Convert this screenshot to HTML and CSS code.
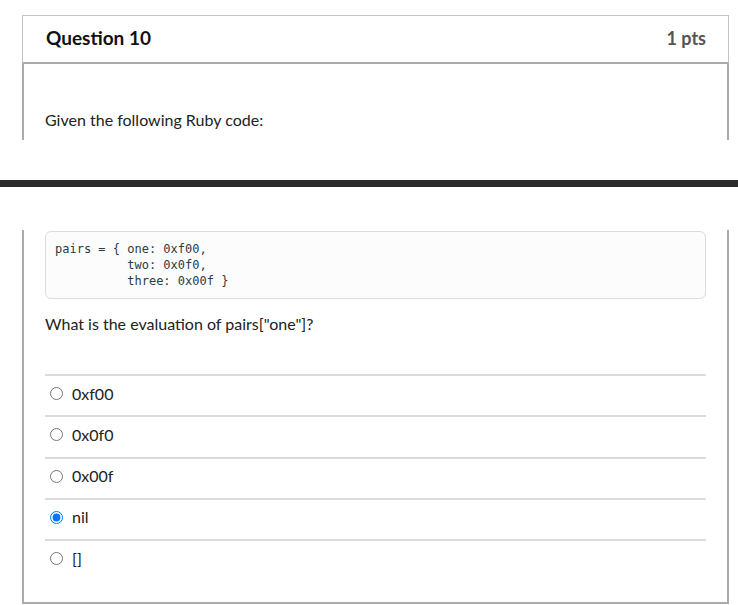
FILE: index.html
```html
<!DOCTYPE html>
<html>
<head>
<meta charset="utf-8">
<link rel="stylesheet" href="styles.css">
</head>
<body>
<div class="page">
  <section class="question-top">
    <header class="q-header">
      <h2 class="q-title">Question 10</h2>
      <span class="q-pts">1 pts</span>
    </header>
    <div class="q-body-top">
      <p class="q-text">Given the following Ruby code:</p>
    </div>
  </section>

  <div class="divider"></div>

  <section class="question-bottom">
    <pre class="code">pairs = { one: 0xf00,
          two: 0x0f0,
          three: 0x00f }</pre>
    <p class="q-text q-prompt">What is the evaluation of pairs["one"]?</p>
    <div class="answers">
      <label class="answer"><input type="radio" name="a"><span>0xf00</span></label>
      <label class="answer"><input type="radio" name="a"><span>0x0f0</span></label>
      <label class="answer"><input type="radio" name="a"><span>0x00f</span></label>
      <label class="answer"><input type="radio" name="a" checked><span>nil</span></label>
      <label class="answer"><input type="radio" name="a"><span>[]</span></label>
    </div>
  </section>
</div>
</body>
</html>
```
FILE: styles.css
```css
* { box-sizing: border-box; }

html, body {
  margin: 0;
  padding: 0;
  background: #fff;
}

body {
  font-family: Lato, "Liberation Sans", Arial, sans-serif;
  color: #222;
  width: 738px;
  height: 605px;
  overflow: hidden;
}

.page {
  padding-top: 15px;
}

.question-top {
  margin: 0 9px 0 22px;
  width: 707px;
}

.q-header {
  display: flex;
  justify-content: space-between;
  align-items: center;
  height: 49px;
  padding: 0 22px 3px 23px;
  border: 1px solid #c4c4c4;
  border-bottom: 2px solid #ababab;
}

.q-title {
  margin: 0;
  font-size: 19px;
  font-weight: 700;
  color: #111;
}

.q-pts {
  font-size: 18px;
  font-weight: 700;
  color: #555;
}

.q-body-top {
  height: 76px;
  padding: 46px 21px 0;
  border-left: 2px solid #ababab;
  border-right: 2px solid #ababab;
}

.q-text {
  margin: 0;
  font-size: 16px;
  line-height: 20px;
}

.divider {
  margin-top: 40px;
  height: 7px;
  background: #2b2b2b;
}

.question-bottom {
  margin: 43px 9px 0 22px;
  width: 707px;
  height: 374px;
  padding: 1px 21px 0;
  border-left: 2px solid #ababab;
  border-right: 2px solid #ababab;
  border-bottom: 2px solid #ababab;
}

.code {
  margin: 0;
  padding: 9px;
  border: 1px solid #dcdcdc;
  border-radius: 6px;
  background: #fcfcfc;
  font-family: "DejaVu Sans Mono", "Liberation Mono", monospace;
  font-size: 12px;
  line-height: 16px;
  color: #2d3b45;
  height: 68px;
}

.q-prompt {
  margin-top: 15px;
}

.answers {
  margin-top: 40px;
  display: flex;
  flex-direction: column;
}

.answer {
  display: flex;
  align-items: center;
  border-top: 2px solid #dcdcdc;
  padding: 7.5px 0 11.75px;
  font-size: 16px;
  line-height: 20px;
}

.answer input {
  margin: 0 9px 0 5px;
  width: 13px;
  height: 13px;
}
```
